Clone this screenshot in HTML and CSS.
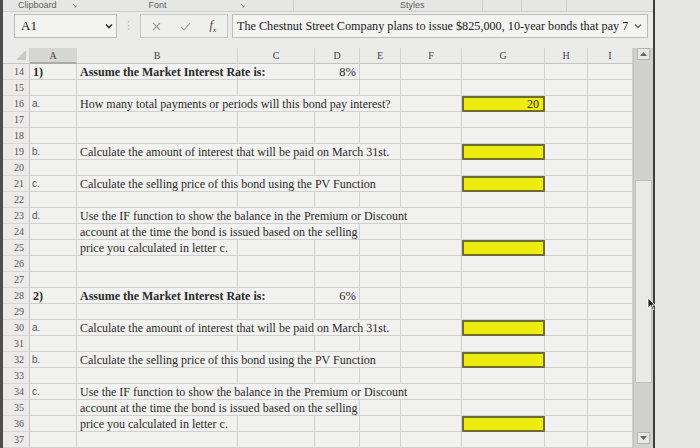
FILE: index.html
```html
<!DOCTYPE html>
<html>
<head>
<meta charset="utf-8">
<link rel="stylesheet" href="styles.css">
</head>
<body>
<div class="app">
  <div class="main">
    <div class="ribbon">
      <div class="seg seg1"><span class="rl">Clipboard</span><span class="launch l1"><svg width="5" height="5" viewBox="0 0 5 5"><path d="M1 1 L4 4 M4 2 L4 4 L2 4" fill="none" stroke="#8a8a8a" stroke-width="0.9"/></svg></span><span class="rl font">Font</span><span class="launch l2"><svg width="5" height="5" viewBox="0 0 5 5"><path d="M1 1 L4 4 M4 2 L4 4 L2 4" fill="none" stroke="#8a8a8a" stroke-width="0.9"/></svg></span></div>
      <div class="seg seg2"><span class="rl styles">Styles</span></div>
      <div class="seg seg3"></div>
      <div class="seg seg4"></div>
      <div class="seg seg5"></div>
    </div>
    <div class="fbar">
      <div class="namebox"><span>A1</span><svg class="chev" width="8" height="6" viewBox="0 0 8 6"><path d="M1 1.5 L4 4.5 L7 1.5" fill="none" stroke="#333" stroke-width="1.6"/></svg></div>
      <div class="dots">⋮</div>
      <div class="fxbox">
        <svg width="9" height="9" viewBox="0 0 9 9"><path d="M1 1 L8 8 M8 1 L1 8" stroke="#9a9a9a" stroke-width="1.1"/></svg>
        <svg width="11" height="9" viewBox="0 0 11 9"><path d="M1 5 L4 8 L10 1" fill="none" stroke="#9a9a9a" stroke-width="1.1"/></svg>
        <span class="fx">f<sub>x</sub></span>
      </div>
      <div class="formula"><span class="ftext">The Chestnut Street Company plans to issue $825,000, 10-year bonds that pay 7</span><svg class="chev" width="8" height="6" viewBox="0 0 8 6"><path d="M1 1.5 L4 4.5 L7 1.5" fill="none" stroke="#666" stroke-width="1.4"/></svg></div>
    </div>
    <div class="area">
      <div class="sheet">
        <div class="corner"><svg width="10" height="10" viewBox="0 0 10 10"><path d="M10 0 L10 10 L0 10 Z" fill="#c9c9c7"/></svg></div>
        <div class="ch sel">A</div><div class="ch">B</div><div class="ch">C</div><div class="ch">D</div><div class="ch">E</div><div class="ch">F</div><div class="ch">G</div><div class="ch">H</div><div class="ch">I</div>

        <div class="rh">14</div><div class="c b">1)</div><div class="c b">Assume the Market Interest Rate is:</div><div class="c"></div><div class="c r pct">8%</div><div class="c"></div><div class="c"></div><div class="c"></div><div class="c"></div><div class="c"></div>
        <div class="rh">15</div><div class="c"></div><div class="c"></div><div class="c"></div><div class="c"></div><div class="c"></div><div class="c"></div><div class="c"></div><div class="c"></div><div class="c"></div>
        <div class="rh">16</div><div class="c lab">a.</div><div class="c s4">How many total payments or periods will this bond pay interest?</div><div class="c"></div><div class="c y r">20</div><div class="c"></div><div class="c"></div>
        <div class="rh">17</div><div class="c"></div><div class="c"></div><div class="c"></div><div class="c"></div><div class="c"></div><div class="c"></div><div class="c"></div><div class="c"></div><div class="c"></div>
        <div class="rh">18</div><div class="c"></div><div class="c"></div><div class="c"></div><div class="c"></div><div class="c"></div><div class="c"></div><div class="c"></div><div class="c"></div><div class="c"></div>
        <div class="rh">19</div><div class="c lab">b.</div><div class="c s4">Calculate the amount of interest that will be paid on March 31st.</div><div class="c"></div><div class="c y"></div><div class="c"></div><div class="c"></div>
        <div class="rh">20</div><div class="c"></div><div class="c"></div><div class="c"></div><div class="c"></div><div class="c"></div><div class="c"></div><div class="c"></div><div class="c"></div><div class="c"></div>
        <div class="rh">21</div><div class="c lab">c.</div><div class="c s4">Calculate the selling price of this bond using the PV Function</div><div class="c"></div><div class="c y"></div><div class="c"></div><div class="c"></div>
        <div class="rh">22</div><div class="c"></div><div class="c"></div><div class="c"></div><div class="c"></div><div class="c"></div><div class="c"></div><div class="c"></div><div class="c"></div><div class="c"></div>
        <div class="rh">23</div><div class="c lab">d.</div><div class="c s5">Use the IF function to show the balance in the Premium or Discount</div><div class="c"></div><div class="c"></div><div class="c"></div>
        <div class="rh">24</div><div class="c"></div><div class="c s3">account at the time the bond is issued based on the selling</div><div class="c"></div><div class="c"></div><div class="c"></div><div class="c"></div><div class="c"></div>
        <div class="rh">25</div><div class="c"></div><div class="c">price you calculated in letter c.</div><div class="c"></div><div class="c"></div><div class="c"></div><div class="c"></div><div class="c y"></div><div class="c"></div><div class="c"></div>
        <div class="rh">26</div><div class="c"></div><div class="c"></div><div class="c"></div><div class="c"></div><div class="c"></div><div class="c"></div><div class="c"></div><div class="c"></div><div class="c"></div>
        <div class="rh">27</div><div class="c"></div><div class="c"></div><div class="c"></div><div class="c"></div><div class="c"></div><div class="c"></div><div class="c"></div><div class="c"></div><div class="c"></div>
        <div class="rh">28</div><div class="c b">2)</div><div class="c b">Assume the Market Interest Rate is:</div><div class="c"></div><div class="c r pct">6%</div><div class="c"></div><div class="c"></div><div class="c"></div><div class="c"></div><div class="c"></div>
        <div class="rh">29</div><div class="c"></div><div class="c"></div><div class="c"></div><div class="c"></div><div class="c"></div><div class="c"></div><div class="c"></div><div class="c"></div><div class="c"></div>
        <div class="rh">30</div><div class="c lab">a.</div><div class="c s4">Calculate the amount of interest that will be paid on March 31st.</div><div class="c"></div><div class="c y"></div><div class="c"></div><div class="c"></div>
        <div class="rh">31</div><div class="c"></div><div class="c"></div><div class="c"></div><div class="c"></div><div class="c"></div><div class="c"></div><div class="c"></div><div class="c"></div><div class="c"></div>
        <div class="rh">32</div><div class="c lab">b.</div><div class="c s4">Calculate the selling price of this bond using the PV Function</div><div class="c"></div><div class="c y"></div><div class="c"></div><div class="c"></div>
        <div class="rh">33</div><div class="c"></div><div class="c"></div><div class="c"></div><div class="c"></div><div class="c"></div><div class="c"></div><div class="c"></div><div class="c"></div><div class="c"></div>
        <div class="rh">34</div><div class="c lab">c.</div><div class="c s5">Use the IF function to show the balance in the Premium or Discount</div><div class="c"></div><div class="c"></div><div class="c"></div>
        <div class="rh">35</div><div class="c"></div><div class="c s3">account at the time the bond is issued based on the selling</div><div class="c"></div><div class="c"></div><div class="c"></div><div class="c"></div><div class="c"></div>
        <div class="rh">36</div><div class="c"></div><div class="c">price you calculated in letter c.</div><div class="c"></div><div class="c"></div><div class="c"></div><div class="c"></div><div class="c y"></div><div class="c"></div><div class="c"></div>
        <div class="rh">37</div><div class="c"></div><div class="c"></div><div class="c"></div><div class="c"></div><div class="c"></div><div class="c"></div><div class="c"></div><div class="c"></div><div class="c"></div>
      </div>
      <div class="vscroll">
        <div class="sbtn up"><svg width="7" height="4" viewBox="0 0 7 4"><path d="M0 4 L3.5 0 L7 4 Z" fill="#666"/></svg></div>
        <div class="track top"></div>
        <div class="thumb"></div>
        <div class="track bot"></div>
        <div class="sbtn dn"><svg width="7" height="4" viewBox="0 0 7 4"><path d="M0 0 L3.5 4 L7 0 Z" fill="#666"/></svg></div>
      </div>
    </div>
  </div>
  <div class="divider"></div>
  <div class="side"></div>
  <svg class="cursor" width="9" height="14" viewBox="0 0 9 14"><path d="M1 1 L1 11 L3.5 8.5 L5.5 13 L7 12.3 L5 8 L8 8 Z" fill="#222" stroke="#fff" stroke-width="0.8"/></svg>
</div>
</body>
</html>
```

FILE: styles.css
```css
* { box-sizing: border-box; }
html, body { margin: 0; padding: 0; }
body {
  width: 700px;
  height: 448px;
  overflow: hidden;
  background: #e7e7e5;
  font-family: "Liberation Serif", "Times New Roman", serif;
  color: #2b2b2b;
}
.app {
  position: relative;
  display: flex;
  height: 448px;
  border-left: 3px solid #4e4e4e;
}
.main {
  width: 650px;
  display: flex;
  flex-direction: column;
  background: #ebebe9;
}
.divider { width: 2px; background: #3d3d3d; }
.side { flex: 1; background: #e6e6e4; }

/* ribbon */
.ribbon {
  height: 12px;
  display: flex;
  border-bottom: 1px solid #cfcfcd;
  background: #e6e6e4;
  font-family: "Liberation Sans", Arial, sans-serif;
  font-size: 9px;
  color: #5f5f5f;
  line-height: 11px;
}
.seg { position: relative; height: 100%; border-right: 1px solid #cdcdcb; display: flex; align-items: flex-start; }
.seg1 { width: 291px; padding-left: 15px; }
.seg2 { width: 189px; }
.seg3 { width: 39px; }
.seg4 { width: 45px; }
.seg5 { flex: 1; border-right: none; }
.launch {
  width: 7px; height: 7px; margin-top: 2px;
  display: flex; align-items: center; justify-content: center;
}
.l1 { margin-left: 14px; }
.font { margin-left: 71px; }
.l2 { margin-left: 72px; }
.styles { margin-left: 106px; }

/* formula bar */
.fbar {
  height: 24px;
  margin-top: 2px;
  display: flex;
  align-items: stretch;
  padding-left: 11px;
}
.namebox {
  width: 103px;
  border: 1px solid #bdbdbb;
  background: #f3f3f1;
  display: flex;
  align-items: center;
  justify-content: space-between;
  padding: 0 3px 0 6px;
  font-size: 13px;
  color: #222;
}
.dots {
  width: 23px;
  text-align: center;
  color: #b5b5b3;
  font-family: "DejaVu Sans", sans-serif;
  font-size: 11px;
  line-height: 24px;
}
.fxbox {
  width: 88px;
  border: 1px solid #c6c6c4;
  background: #efefed;
  display: flex;
  align-items: center;
  justify-content: space-between;
  padding: 0 11px 0 11px;
}
.fx {
  font-style: italic;
  font-size: 12px;
  color: #444;
}
.fx sub { font-size: 7px; }
.formula {
  width: 416px;
  margin-left: 4px;
  border: 1px solid #bdbdbb;
  background: #f3f3f1;
  display: flex;
  align-items: center;
  justify-content: space-between;
  padding: 0 5px 0 4px;
  font-size: 12.2px;
  color: #222;
  white-space: nowrap;
}
.ftext { overflow: hidden; }
.chev { flex-shrink: 0; }

/* sheet */
.area {
  margin-top: 10px;
  display: flex;
  flex: 1;
}
.sheet {
  display: grid;
  grid-template-columns: 27px 47px 161px 77px 45px 41px 61px 83px 43px 45px;
  grid-auto-rows: 16px;
  background: #f1f1ef;
  width: 630px;
}
.corner {
  display: flex;
  align-items: flex-end;
  justify-content: flex-end;
  padding: 0 3px 3px 0;
  border-right: 1px solid #cfcfcd;
  border-bottom: 1px solid #c4c4c2;
  background: #ebebe9;
}
.ch {
  text-align: center;
  font-size: 10px;
  line-height: 15px;
  color: #444;
  background: #ebebe9;
  border-right: 1px solid #d3d3d1;
  border-bottom: 1px solid #c4c4c2;
}
.ch.sel {
  background: #d6d6d4;
  border-bottom: 2px solid #a9a9a7;
}
.rh {
  font-size: 10px;
  line-height: 16px;
  color: #555;
  padding-left: 11px;
  border-right: 1px solid #c4c4c2;
  border-bottom: 1px solid #d6d6d4;
  background: #ecebe9;
}
.c {
  font-size: 12px;
  line-height: 16px;
  padding-left: 3px;
  white-space: nowrap;
  border-right: 1px solid #d0d0ce;
  border-bottom: 1px solid #d0d0ce;
  overflow: visible;
}
.c.b { font-weight: bold; }
.c.r { text-align: right; padding-right: 3px; }
.c.pct { font-size: 12.5px; }
.c.lab {
  font-family: "Liberation Sans", Arial, sans-serif;
  font-size: 10px;
  color: #555;
  padding-left: 2px;
}
.s3 { grid-column: span 3; }
.s4 { grid-column: span 4; }
.s5 { grid-column: span 5; }
.c.y {
  background: #efec12;
  border: 2px solid #6e6b33;
  line-height: 12px;
  padding-right: 4px;
}

/* scrollbar */
.vscroll {
  width: 20px;
  display: flex;
  flex-direction: column;
  background: #d0d0ce;
  border-left: 1px solid #c2c2c0;
}
.sbtn {
  height: 12px;
  margin: 0 3px;
  display: flex;
  align-items: center;
  justify-content: center;
  background: #e8e8e6;
  border: 1px solid #b3b3b1;
}
.track.top { height: 120px; }
.thumb {
  height: 203px;
  margin: 0 1px;
  background: #e9e9e7;
  border: 1px solid #bfbfbd;
}
.track.bot { flex: 1; }
.sbtn.dn { margin-bottom: 4px; }

.cursor {
  position: absolute;
  left: 644px;
  top: 297px;
}
```
